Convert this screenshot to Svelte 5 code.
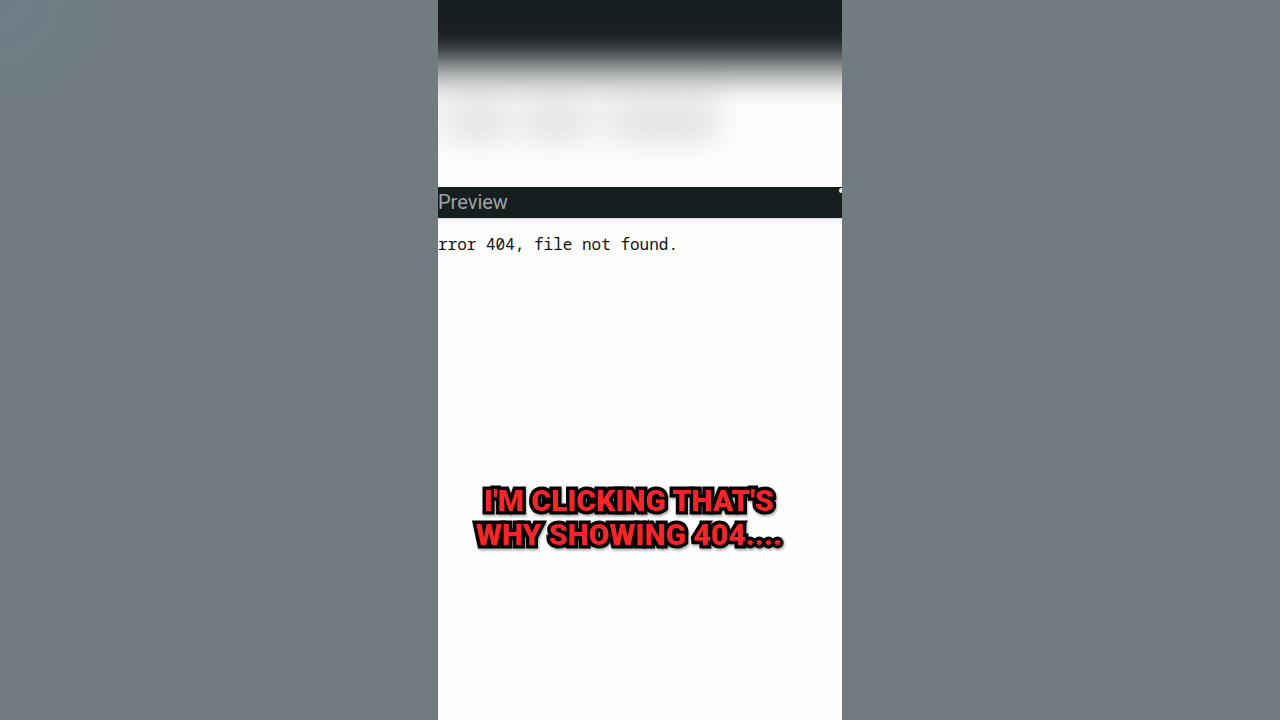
<script lang="ts">
    const title = "Preview";
    const message = "rror 404, file not found.";
    const caption = ["I'M CLICKING THAT'S", "WHY SHOWING 404...."];
</script>

<main class="stage">
    <article class="short">
        <div class="blurred" aria-hidden="true">
            <span class="smudge wide"></span>
            <span class="smudge first"></span>
            <span class="smudge second"></span>
            <span class="smudge third"></span>
        </div>

        <header class="bar">
            <h1>{title}</h1>
            <span class="dot"></span>
        </header>

        <section class="page">
            <pre>{message}</pre>

            <p class="caption">
                {#each caption as line}
                    <span>{line}</span>
                {/each}
            </p>
        </section>
    </article>
</main>

<style>
    :global(body) {
        margin: 0;
        background: #717c81;
    }

    .stage {
        display: flex;
        justify-content: center;
        min-height: 100vh;
        background: radial-gradient(circle at 0 0, #6d7d87 0, #717c81 128px);
    }

    .short {
        display: flex;
        flex-direction: column;
        height: 100vh;
        aspect-ratio: 101 / 180;
        overflow: hidden;
        background: #fefefe;
    }

    .blurred {
        position: relative;
        flex: none;
        height: 187px;
        overflow: hidden;
        background: linear-gradient(
            #171e20 0,
            #181f21 28px,
            #212628 38px,
            #393e40 47px,
            #5c6062 56px,
            #868a8b 65px,
            #b2b4b5 75px,
            #d7d7da 85px,
            #f1f1f2 95px,
            #fefefe 107px
        );
    }

    .smudge {
        position: absolute;
        top: 104px;
        height: 38px;
        border-radius: 20px;
        background: rgba(0, 0, 0, 0.05);
        filter: blur(14px);
    }

    .wide {
        top: 84px;
        left: -10px;
        width: 298px;
        height: 62px;
    }

    .first {
        left: 14px;
        width: 52px;
    }

    .second {
        left: 90px;
        width: 54px;
    }

    .third {
        left: 178px;
        width: 100px;
    }

    .bar {
        position: relative;
        flex: none;
        height: 31px;
        overflow: hidden;
        background: #171e20;
    }

    h1 {
        margin: 0;
        font: 400 20px/30px Roboto, sans-serif;
        color: #a0a4a6;
    }

    .dot {
        position: absolute;
        top: 1px;
        right: -2px;
        width: 5px;
        height: 5px;
        border-radius: 50%;
        background: #e8eaea;
    }

    .page {
        flex: 1;
        background: linear-gradient(#d8d9dc 0, #f4f4f7 2px, #fefefe 9px);
    }

    pre {
        margin: 0;
        padding-top: 16px;
        font: 400 16px/20px "Noto Sans Mono", "DejaVu Sans Mono", monospace;
        color: #111;
    }

    .caption {
        margin: 230px 22px 0 0;
        font: 900 30px/34px Roboto, sans-serif;
        text-align: center;
        color: #f52529;
        -webkit-text-stroke: 7px #000;
        paint-order: stroke fill;
        stroke-linejoin: round;
        filter: drop-shadow(1px 2px 1px rgba(0, 0, 0, 0.3));
    }

    .caption span {
        display: block;
        white-space: nowrap;
    }
</style>
